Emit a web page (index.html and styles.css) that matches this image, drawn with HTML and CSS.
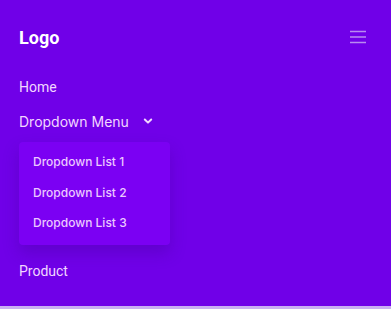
FILE: index.html
```html
<!DOCTYPE html>
<html lang="en">
<head>
    <meta charset="UTF-8">
    <meta name="viewport" content="width=device-width, initial-scale=1.0">
    <title>Navbar</title>
    <link rel="stylesheet" href="styles.css">
</head>
<body>
    <nav class="navbar">
        <div class="nav-head">
            <a href="#" class="logo">Logo</a>
            <button class="toggle" aria-label="Menu">
                <svg width="18" height="14" viewBox="0 0 18 14">
                    <path d="M1 1.5h16M1 7h16M1 12.5h16" stroke="currentColor" stroke-width="1.6" fill="none"/>
                </svg>
            </button>
        </div>
        <ul class="menu">
            <li><a href="#" class="link">Home</a></li>
            <li class="dropdown">
                <a href="#" class="link drop-link">Dropdown Menu
                    <svg class="chevron" width="10" height="8" viewBox="0 0 10 8">
                        <path d="M1.8 2.5L5 5.6l3.2-3.1" stroke="currentColor" stroke-width="2" fill="none" stroke-linecap="round" stroke-linejoin="round"/>
                    </svg>
                </a>
                <ul class="drop-list">
                    <li><a href="#">Dropdown List 1</a></li>
                    <li><a href="#">Dropdown List 2</a></li>
                    <li><a href="#">Dropdown List 3</a></li>
                </ul>
            </li>
            <li><a href="#" class="link">Product</a></li>
        </ul>
    </nav>
    <div class="strip"></div>
</body>
</html>
```

FILE: styles.css
```css
* {
    box-sizing: border-box;
}
body {
    margin: 0;
    background: #c9b0f2;
    font-family: Inter, "Noto Sans", sans-serif;
}
a {
    text-decoration: none;
}
ul {
    list-style: none;
    margin: 0;
    padding: 0;
}
.navbar {
    background: #7000e8;
    height: 306px;
    padding: 0 19px;
}
.nav-head {
    display: flex;
    justify-content: space-between;
    align-items: center;
    height: 70px;
    padding-top: 4px;
}
.logo {
    font-family: Roboto, Arial, sans-serif;
    font-weight: 700;
    font-size: 18px;
    color: #fff;
}
.toggle {
    background: none;
    border: 0;
    padding: 0;
    margin-right: 5px;
    color: #b98bf0;
    display: flex;
}
.menu .link {
    display: flex;
    align-items: center;
    height: 34px;
    font-size: 14px;
    color: #f2d6ff;
    font-family: Roboto, Arial, sans-serif;
}
.menu .drop-link {
    font-family: Inter, sans-serif;
}
.chevron {
    margin-left: 14px;
    color: #f2d6ff;
}
.drop-list {
    width: 151px;
    margin: 4px 0 9px;
    padding: 5px 0 6px;
    background: #7b00f3;
    border-radius: 4px;
    box-shadow: 0 8px 16px rgba(60, 0, 140, 0.3);
}
.drop-list a {
    display: block;
    padding: 0 14px;
    line-height: 30.5px;
    font-size: 12px;
    font-weight: 500;
    color: #ecc9ff;
}
.strip {
    height: 3px;
}
```
